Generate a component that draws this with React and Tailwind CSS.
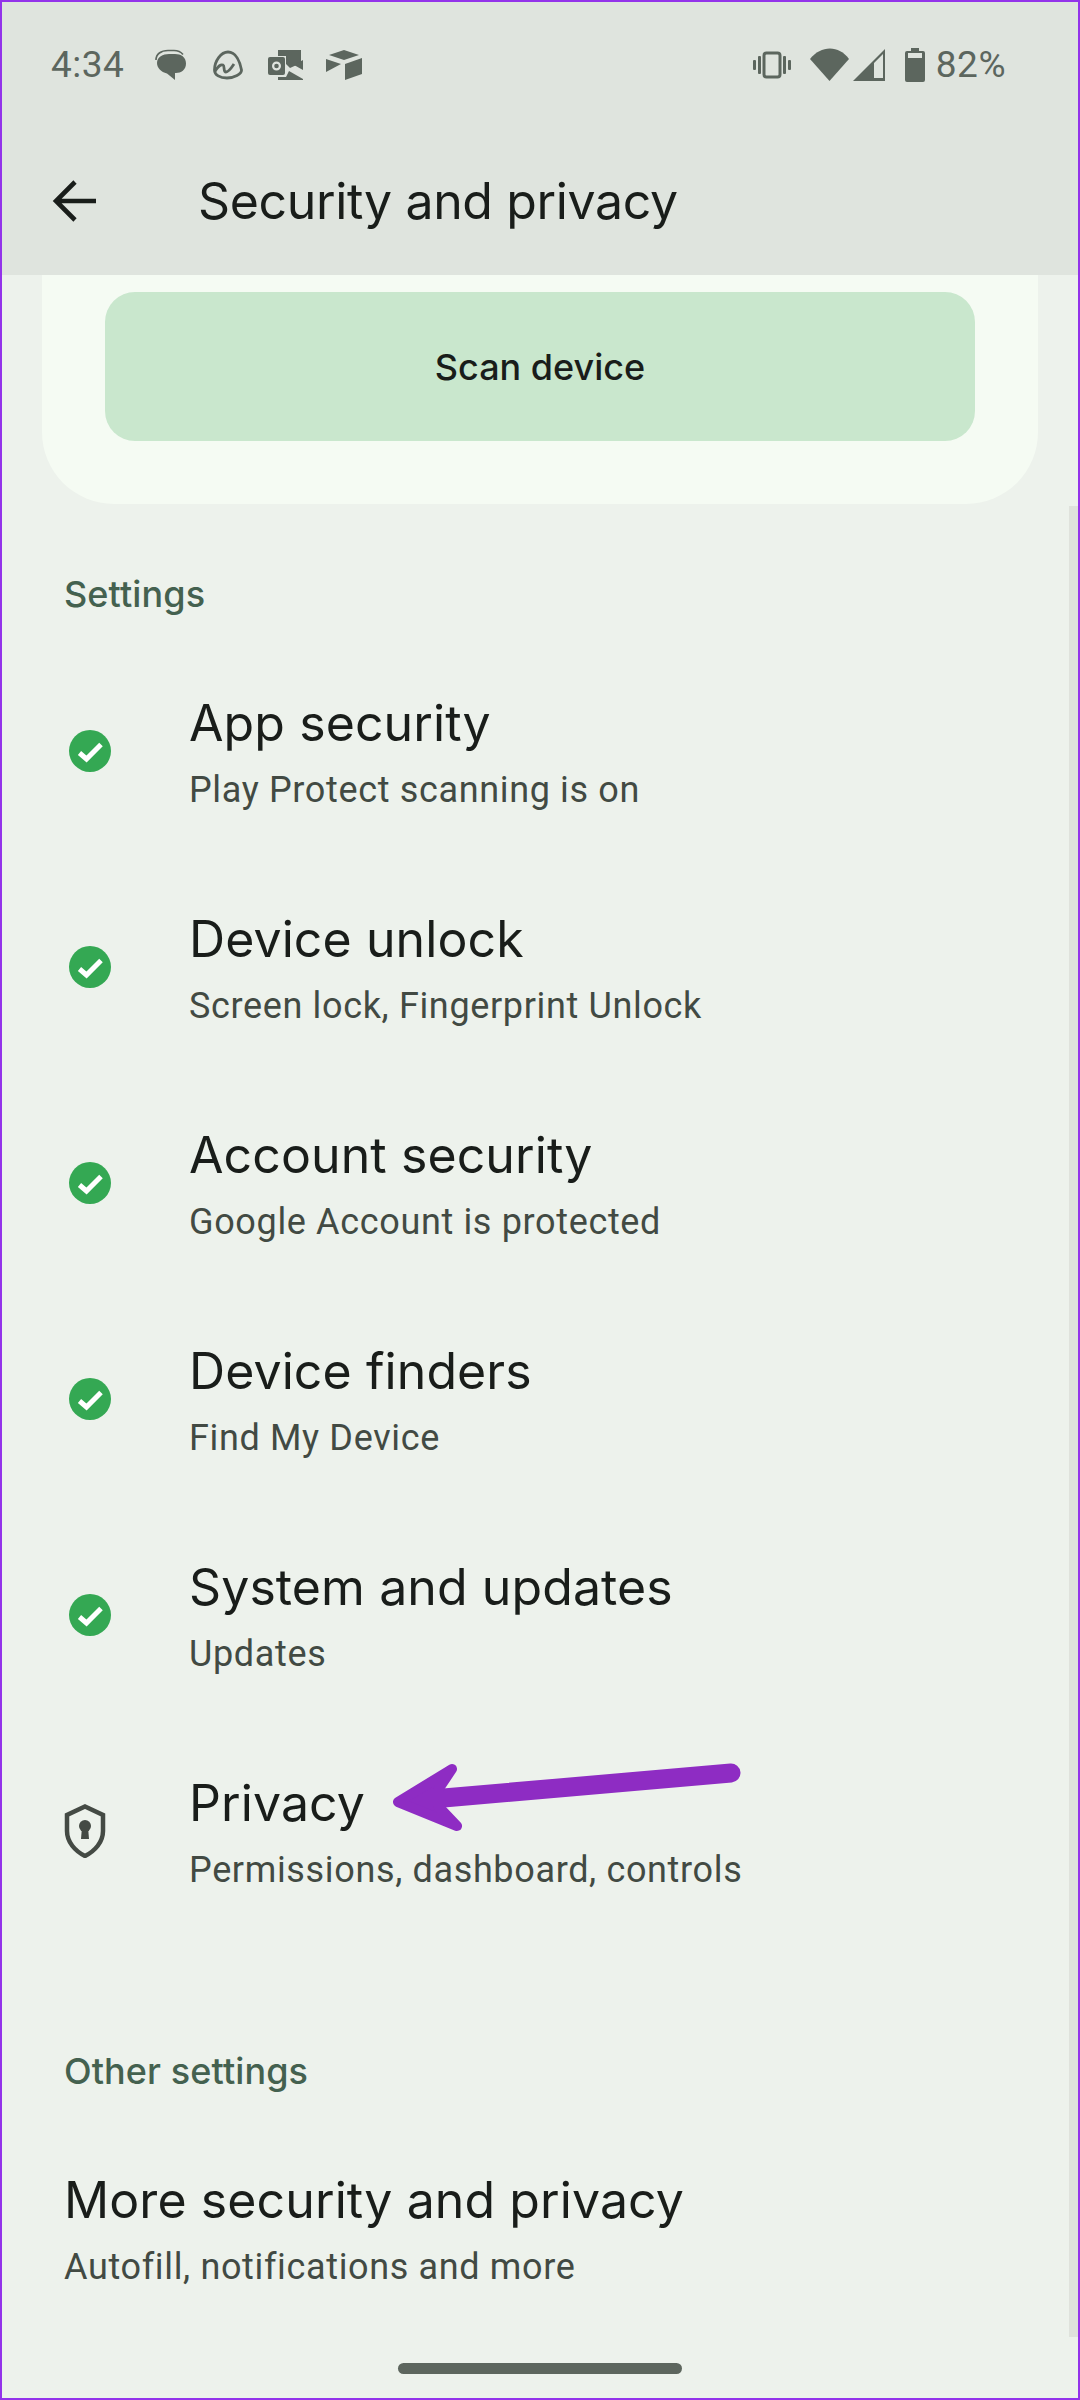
const titleFont = "font-['Inter',sans-serif]";
const titleClass = `text-[50px] leading-[60px] text-[#191d1a] ${titleFont}`;
const subClass = "text-[36px] leading-[48px] text-[#424a43] font-['Roboto',sans-serif] tracking-[0.65px]";
const sectionClass = "text-[36px] leading-[48px] font-medium text-[#44614f] font-['Inter',sans-serif] tracking-[0.1px]";

function Check() {
  return (
    <svg width="42" height="42" viewBox="0 0 42 42">
      <circle cx="21" cy="21" r="21" fill="#34a853" />
      <path d="M10.500 23l7 6L32 14.500" fill="none" stroke="#fff" strokeWidth="5" />
    </svg>
  );
}

function Shield() {
  return (
    <svg width="42" height="54" viewBox="0 0 42 54" className="-ml-[5px]">
      <path d="M21 2.500L39 11V27C39 38 31 47 21 52C11 47 3 38 3 27V11Z" fill="none" stroke="#444a44" strokeWidth="4.500" />
      <circle cx="21" cy="22" r="6" fill="#444a44" />
      <path d="M18 23h6l1 12H17z" fill="#444a44" />
    </svg>
  );
}

function StatusLeft() {
  return (
    <div className="flex items-center">
      <span className="w-[104px] text-[37px] leading-[44px] text-[#5c665e] font-['Roboto',sans-serif] tracking-[0.5px]">4:34</span>
      <svg width="32" height="32" viewBox="0 0 32 32">
        <path d="M1 11C1 5 6 1.500 13 1.500h6c4 0 7 1.500 9 4" fill="none" stroke="#5c665e" strokeWidth="1.600" />
        <path d="M14 5h6c6 0 11 3 11 9.500S26 24 21 24h-1v7l-8-6.500C6 23 2 19 2 14 2 8 8 5 14 5z" fill="#5c665e" />
      </svg>
      <svg width="30" height="30" viewBox="0 0 30 30" className="ml-[26px]">
        <path d="M15 2C23 2 27 12 28.500 20 28.800 24 21 28 14 28 7 28 1.500 25 1.500 20 1.500 11 8 2 15 2z" fill="none" stroke="#5c665e" strokeWidth="2.800" />
        <path d="M2 21c3-4 5-7 8-6 2 1 0 7 3 7 3 0 6-5 8-8" fill="none" stroke="#5c665e" strokeWidth="2.800" />
      </svg>
      <svg width="36" height="30" viewBox="0 0 36 30" className="ml-[25px]">
        <path d="M10 0H33V13L22 18 18 14V6H10z" fill="#5c665e" />
        <rect x="0" y="7" width="17" height="18" rx="2" fill="#5c665e" />
        <circle cx="8.500" cy="16" r="3.400" fill="none" stroke="#dfe4de" strokeWidth="2.200" />
        <path d="M26 15L35 10V20z" fill="#5c665e" />
        <path d="M10 27H18L21 21 35 29V30H10z" fill="#5c665e" />
      </svg>
      <svg width="36" height="30" viewBox="0 0 36 30" className="ml-[22px]">
        <path d="M18 0L33 5 18 10 3 5z" fill="#5c665e" />
        <path d="M0 9L15 14 0 22z" fill="#5c665e" />
        <path d="M19 14L36 8V24L19 30z" fill="#5c665e" />
      </svg>
    </div>
  );
}

function StatusRight() {
  return (
    <div className="flex items-center">
      <svg width="38" height="28" viewBox="0 0 38 28">
        <rect x="0" y="9" width="3" height="10" rx="1" fill="#5c665e" />
        <rect x="5" y="5" width="3" height="18" rx="1" fill="#5c665e" />
        <rect x="11" y="2" width="16" height="24" rx="2.500" fill="none" stroke="#5c665e" strokeWidth="3" />
        <rect x="30" y="5" width="3" height="18" rx="1" fill="#5c665e" />
        <rect x="35" y="9" width="3" height="10" rx="1" fill="#5c665e" />
      </svg>
      <svg width="40" height="34" viewBox="0 0 40 34" className="ml-[19px]">
        <path d="M0 11C11 -3 29 -3 39 11L19.500 33z" fill="#5c665e" />
      </svg>
      <svg width="33" height="33" viewBox="0 0 33 33" className="ml-[3px]">
        <path d="M32 0V32H0zM21 14V29H30V5z" fill="#5c665e" fillRule="evenodd" />
      </svg>
      <svg width="20" height="34" viewBox="0 0 20 34" className="ml-[19px]">
        <path d="M6 0h8v3h4a2 2 0 0 1 2 2v27a2 2 0 0 1-2 2H2a2 2 0 0 1-2-2V5a2 2 0 0 1 2-2h4z" fill="#5c665e" />
        <rect x="3" y="5" width="14" height="5" fill="#dfe4de" />
      </svg>
      <span className="ml-[11px] text-[37px] leading-[44px] text-[#5c665e] font-['Roboto',sans-serif] tracking-[0.5px]">82%</span>
    </div>
  );
}

function Row({ icon, title, sub }) {
  return (
    <div className="flex items-center h-[216px]">
      <div className="w-[187px] pl-[67px] flex items-center shrink-0 h-[54px] mt-[-9px]">{icon}</div>
      <div className="flex flex-col mb-[3px]">
        <div className={`${titleClass} tracking-[0.1px]`}>{title}</div>
        <div className={`mt-[13px] ${subClass}`}>{sub}</div>
      </div>
    </div>
  );
}

export default function App() {
  return (
    <div className="relative w-[1080px] h-[2400px] overflow-hidden bg-[#edf2ec] border-2 border-[#9333ea]">
      <div className="bg-[#dfe4de] h-[273px] flex flex-col">
        <div className="flex justify-between items-center pl-[49px] pr-[72px] pt-[41px]">
          <StatusLeft />
          <StatusRight />
        </div>
        <div className="flex items-center mt-[84px] pl-[48px]">
          <svg width="50" height="50" viewBox="0 0 50 50">
            <path d="M46 25H6M25 6L6 25l19 19" fill="none" stroke="#191d1a" strokeWidth="4.600" />
          </svg>
          <span className={`ml-[98px] ${titleClass} tracking-[-0.35px]`}>Security and privacy</span>
        </div>
      </div>

      <div className="mx-[40px] bg-[#f5fbf3] rounded-b-[72px] h-[229px] px-[63px] pt-[17px]">
        <div className="h-[149px] bg-[#c9e7cd] rounded-[30px] flex items-center justify-center text-[36px] font-medium text-[#191d1a] font-['Inter',sans-serif]">
          Scan device
        </div>
      </div>

      <div className={`pt-[66px] pl-[62px] ${sectionClass}`}>Settings</div>

      <div className="mt-[29px]">
        <Row icon={<Check />} title="App security" sub="Play Protect scanning is on" />
        <Row icon={<Check />} title="Device unlock" sub="Screen lock, Fingerprint Unlock" />
        <Row icon={<Check />} title="Account security" sub="Google Account is protected" />
        <Row icon={<Check />} title="Device finders" sub="Find My Device" />
        <Row icon={<Check />} title="System and updates" sub="Updates" />
        <Row icon={<Shield />} title="Privacy" sub="Permissions, dashboard, controls" />
      </div>

      <div className={`pt-[104px] pl-[62px] ${sectionClass}`}>Other settings</div>

      <div className="pl-[62px] mt-[75px]">
        <div className={`${titleClass} tracking-[0.1px]`}>More security and privacy</div>
        <div className={`mt-[13px] ${subClass}`}>Autofill, notifications and more</div>
      </div>

      <div className="absolute left-[1067px] top-[504px] w-[9px] h-[1831px] bg-[#dfe2dc]" />
      <div className="absolute left-[396px] top-[2361px] w-[284px] h-[11px] rounded-full bg-[#5d665e]" />

      <svg className="absolute left-[380px] top-[1750px]" width="380" height="90" viewBox="0 0 380 90">
        <path d="M349 21L50 47" fill="none" stroke="#8e2cc3" strokeWidth="19" strokeLinecap="round" />
        <path d="M70 17L16 50 75 74 L56 54 L56 38 z" fill="#8e2cc3" stroke="#8e2cc3" strokeWidth="10" strokeLinejoin="round" />
      </svg>
    </div>
  );
}
